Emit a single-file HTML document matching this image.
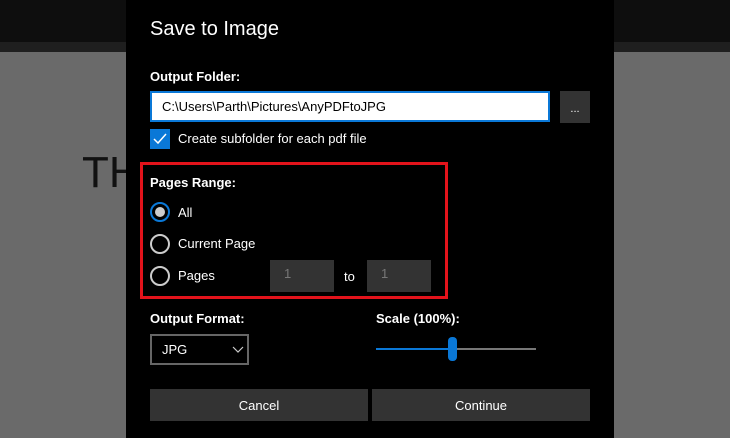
<!DOCTYPE html>
<html><head><style>
*{margin:0;padding:0;box-sizing:border-box}
body{width:730px;height:438px;overflow:hidden;background:#6a6a6a;font-family:"Segoe UI","Liberation Sans",sans-serif;color:#fff;position:relative}
.a{position:absolute}
.lbl{font-size:13px;font-weight:bold}
.t{font-size:13px}
.radio{width:20px;height:20px;border:2px solid #ccc;border-radius:50%}
</style></head><body>
<div class="a" style="left:0;top:0;width:730px;height:42px;background:#0e0e0e"></div>
<div class="a" style="left:0;top:42px;width:730px;height:10px;background:#1f1f1f"></div>
<div class="a" style="left:82px;top:148px;font-size:44px;color:#111;font-family:'Liberation Sans',sans-serif">TH</div>
<div class="a" style="left:126px;top:0;width:488px;height:438px;background:#000"></div>
<div class="a" style="left:150px;top:18px;font-size:20px">Save to Image</div>
<div class="a lbl" style="left:150px;top:69px">Output Folder:</div>
<div class="a t" style="left:150px;top:91px;width:400px;height:31px;background:#fff;border:2px solid #0a78d7;color:#000;padding:6px 0 0 10px">C:\Users\Parth\Pictures\AnyPDFtoJPG</div>
<div class="a" style="left:560px;top:91px;width:30px;height:32px;background:#333;font-size:11px;text-align:center;line-height:36px">...</div>
<div class="a" style="left:150px;top:129px;width:20px;height:20px;background:#0a78d7">
<svg width="20" height="20"><path d="M4 10 L8 14 L16 5" stroke="#fff" stroke-width="1.5" fill="none"/></svg></div>
<div class="a t" style="left:178px;top:131px">Create subfolder for each pdf file</div>
<div class="a" style="left:140px;top:162px;width:308px;height:137px;border:3px solid #e3131b"></div>
<div class="a lbl" style="left:150px;top:175px">Pages Range:</div>
<div class="a radio" style="left:150px;top:202px;border-color:#0a78d7"><div style="width:10px;height:10px;border-radius:50%;background:#ccc;margin:3px"></div></div>
<div class="a t" style="left:178px;top:205px">All</div>
<div class="a radio" style="left:150px;top:234px"></div>
<div class="a t" style="left:178px;top:236px">Current Page</div>
<div class="a radio" style="left:150px;top:266px"></div>
<div class="a t" style="left:178px;top:268px">Pages</div>
<div class="a t" style="left:270px;top:260px;width:64px;height:32px;background:#333;color:#777;padding:6px 0 0 14px">1</div>
<div class="a t" style="left:344px;top:269px">to</div>
<div class="a t" style="left:367px;top:260px;width:64px;height:32px;background:#333;color:#777;padding:6px 0 0 14px">1</div>
<div class="a lbl" style="left:150px;top:311px">Output Format:</div>
<div class="a lbl" style="left:376px;top:311px">Scale (100%):</div>
<div class="a t" style="left:150px;top:334px;width:99px;height:31px;border:2px solid #666;padding:6px 0 0 10px">JPG
<svg class="a" style="left:80px;top:10px" width="12" height="8"><path d="M1 1 L6 6 L11 1" stroke="#ccc" stroke-width="1.2" fill="none"/></svg></div>
<div class="a" style="left:376px;top:348px;width:76px;height:2px;background:#0a78d7"></div>
<div class="a" style="left:452px;top:348px;width:84px;height:2px;background:#777"></div>
<div class="a" style="left:448px;top:337px;width:9px;height:24px;border-radius:4px;background:#0a78d7"></div>
<div class="a t" style="left:150px;top:389px;width:218px;height:32px;background:#333;text-align:center;line-height:34px">Cancel</div>
<div class="a t" style="left:372px;top:389px;width:218px;height:32px;background:#333;text-align:center;line-height:34px">Continue</div>
</body></html>
